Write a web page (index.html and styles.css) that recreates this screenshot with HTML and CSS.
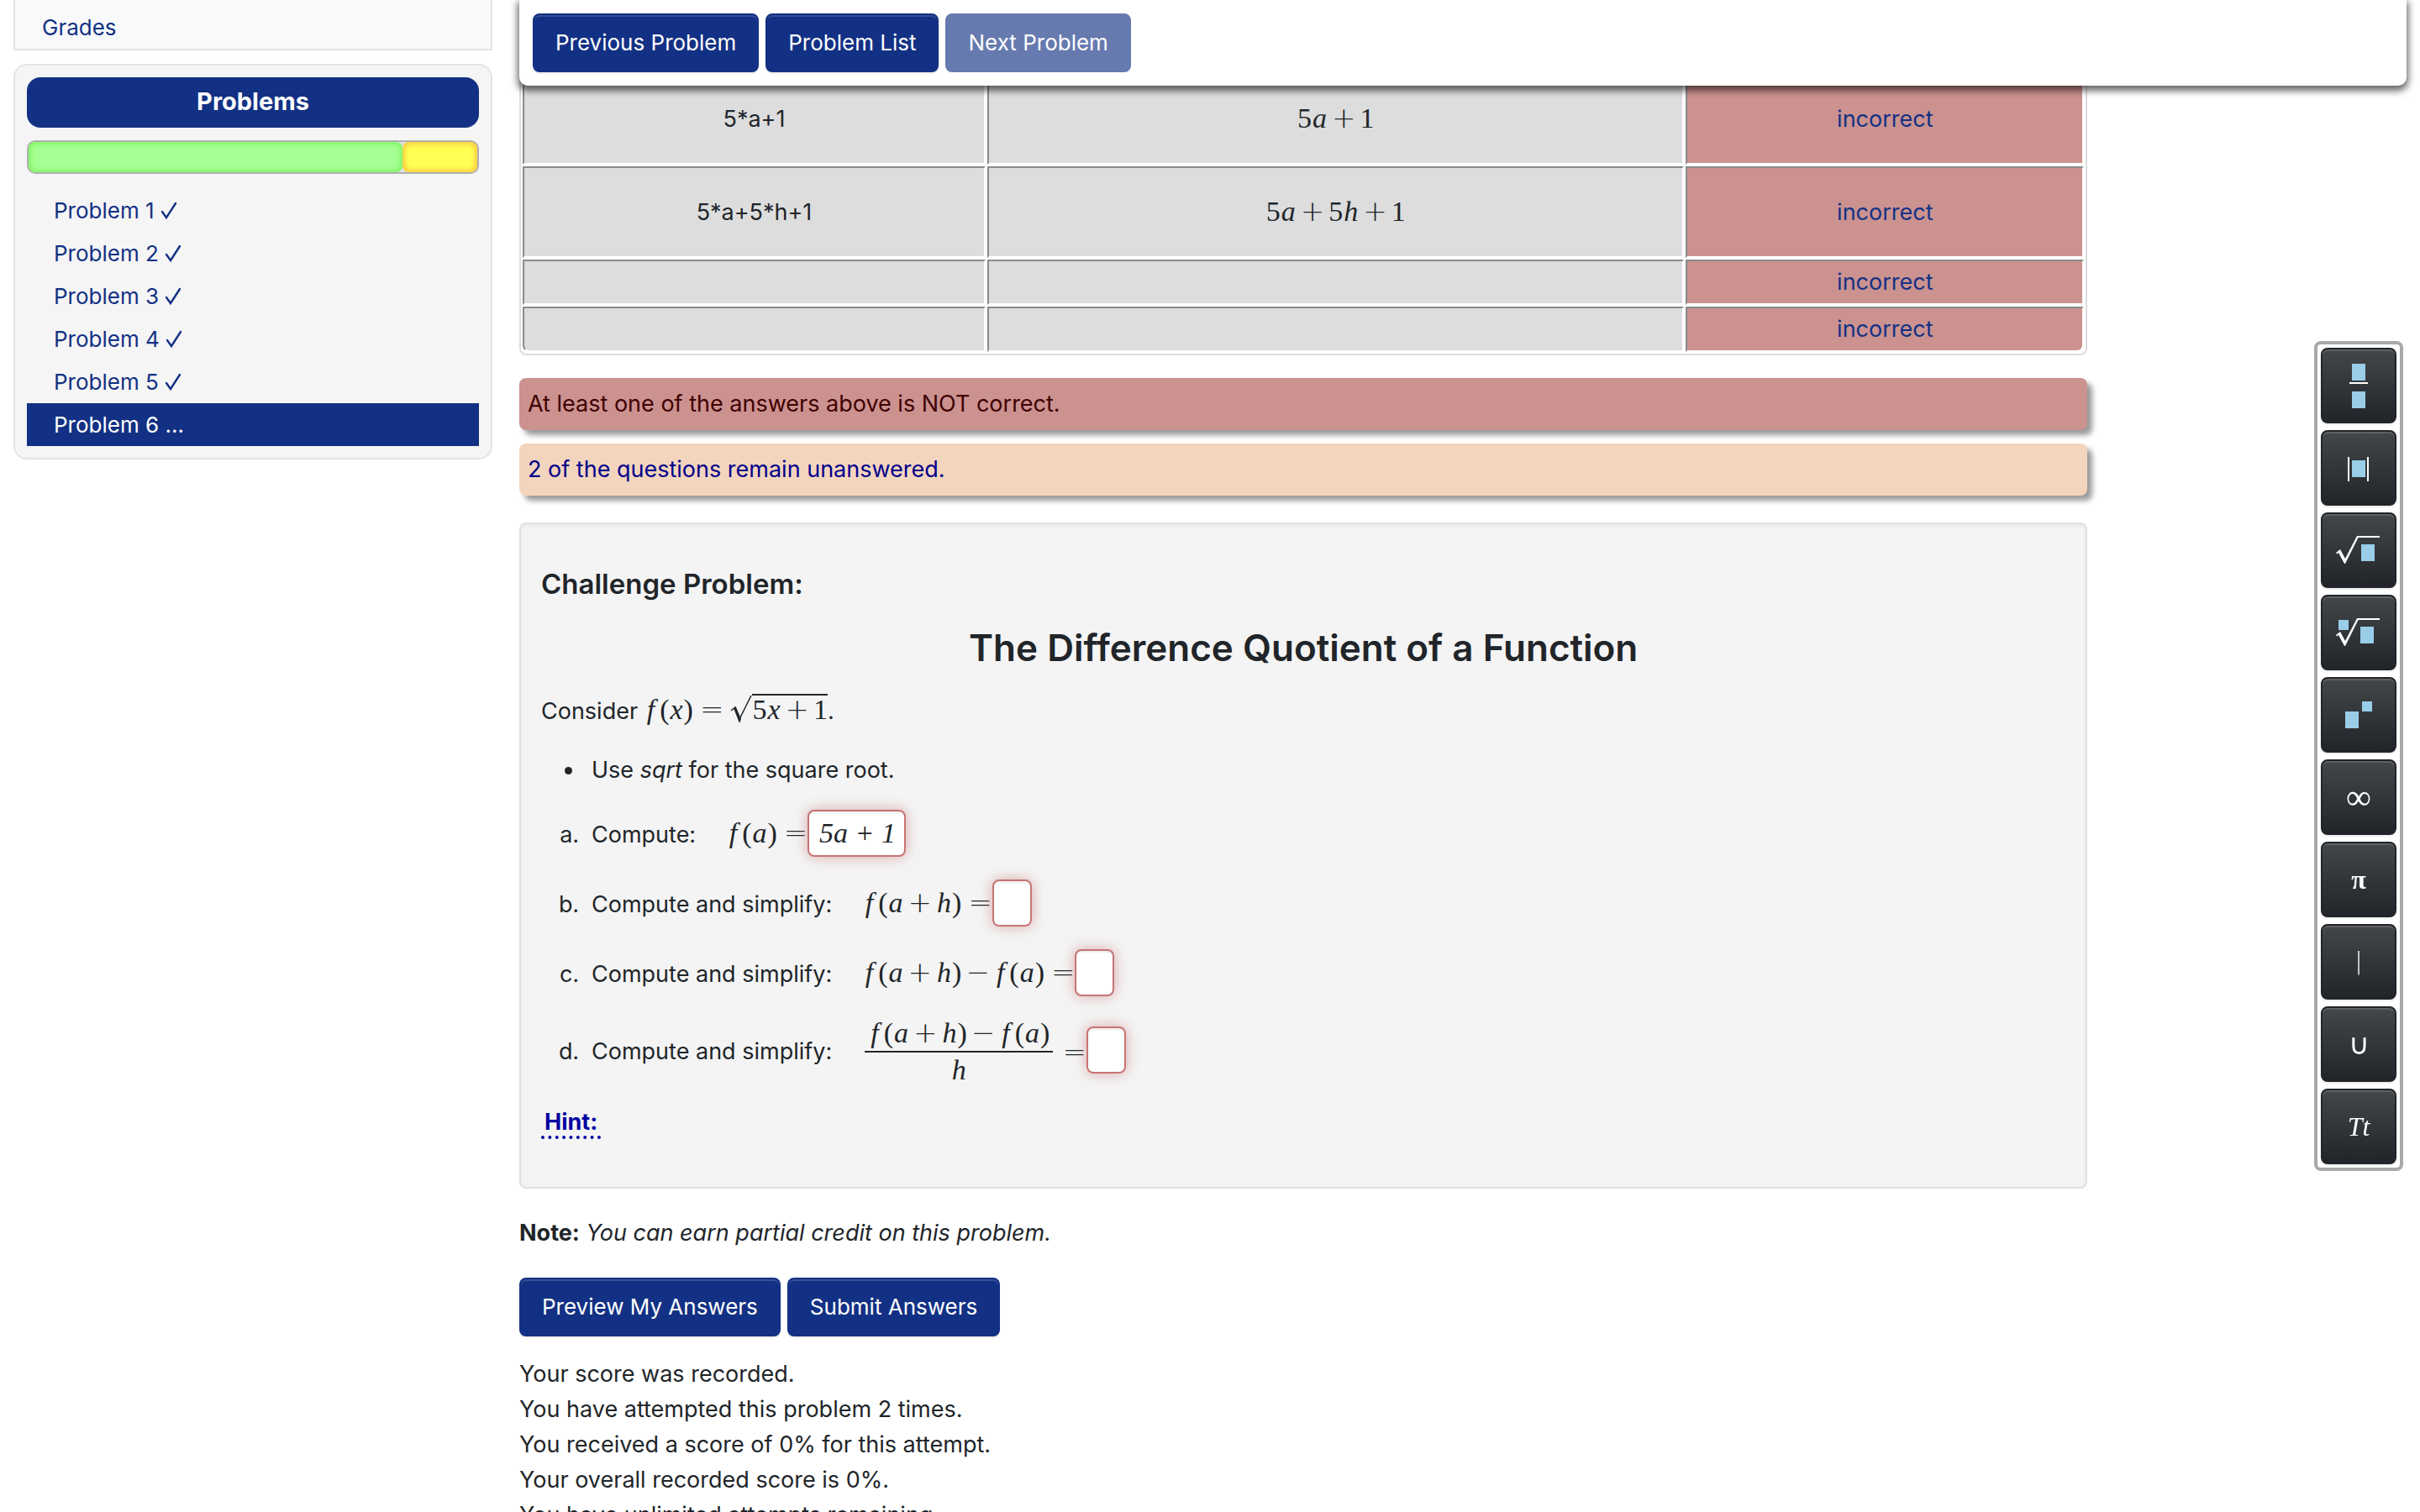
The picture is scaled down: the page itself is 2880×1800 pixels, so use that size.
FILE: index.html
```
<!DOCTYPE html>
<html lang="en">
<head>
<meta charset="utf-8">
<title>Problem 6</title>
<link rel="stylesheet" href="styles.css">
</head>
<body>
<div class="page">
  <aside class="sidebar">
    <nav class="site-nav" aria-label="Site">
      <a href="#">Grades</a>
    </nav>
    <nav class="problems" aria-label="Problems">
      <h2>Problems</h2>
      <div class="progress-bar">
        <div class="correct"></div>
        <div class="inprogress"></div>
      </div>
      <ul class="problem-list">
        <li><a href="#">Problem 1 <svg class="check" viewBox="0 0 20 22"><path d="M2 12l5 7L18 2"/></svg></a></li>
        <li><a href="#">Problem 2 <svg class="check" viewBox="0 0 20 22"><path d="M2 12l5 7L18 2"/></svg></a></li>
        <li><a href="#">Problem 3 <svg class="check" viewBox="0 0 20 22"><path d="M2 12l5 7L18 2"/></svg></a></li>
        <li><a href="#">Problem 4 <svg class="check" viewBox="0 0 20 22"><path d="M2 12l5 7L18 2"/></svg></a></li>
        <li><a href="#">Problem 5 <svg class="check" viewBox="0 0 20 22"><path d="M2 12l5 7L18 2"/></svg></a></li>
        <li><a href="#" class="active">Problem 6 ...</a></li>
      </ul>
    </nav>
  </aside>

  <main class="content">
    <div class="sticky-nav">
      <button type="button" class="btn">Previous Problem</button>
      <button type="button" class="btn">Problem List</button>
      <button type="button" class="btn" disabled>Next Problem</button>
    </div>

    <div class="problem-column">
      <table class="attempt-results">
        <colgroup><col class="entered"><col class="preview"><col class="result"></colgroup>
        <tbody>
          <tr class="tall">
            <td>5*a+1</td>
            <td><span class="math">5<i>a</i><b class="op">+</b>1</span></td>
            <td class="incorrect"><a href="#">incorrect</a></td>
          </tr>
          <tr class="tall">
            <td>5*a+5*h+1</td>
            <td><span class="math">5<i>a</i><b class="op">+</b>5<i>h</i><b class="op">+</b>1</span></td>
            <td class="incorrect"><a href="#">incorrect</a></td>
          </tr>
          <tr>
            <td></td>
            <td></td>
            <td class="incorrect"><a href="#">incorrect</a></td>
          </tr>
          <tr>
            <td></td>
            <td></td>
            <td class="incorrect"><a href="#">incorrect</a></td>
          </tr>
        </tbody>
      </table>

      <div class="message wrong">At least one of the answers above is NOT correct.</div>
      <div class="message blank">2 of the questions remain unanswered.</div>

      <form>
        <section class="problem">
          <h3>Challenge Problem:</h3>
          <h1>The Difference Quotient of a Function</h1>
          <p>Consider <span class="math"><i class="fn">f</i>(<i>x</i>)<b class="op rel">=</b><svg class="radical" viewBox="0 0 26 29"><path d="M1 19l5-4 5 14L25 1" fill="none" stroke-width="1.5"/><path d="M4 16l7 18 2-5-6-14z" stroke="none"/></svg><span class="radicand">5<i>x</i><b class="op">+</b>1</span></span>.</p>
          <ul class="tips">
            <li>Use <em>sqrt</em> for the square root.</li>
          </ul>
          <ol class="parts">
            <li>
              <label for="ans1">Compute: <span class="math"><i class="fn">f</i>(<i>a</i>)<b class="op rel">=</b></span></label>
              <input id="ans1" class="answer filled" type="text" value="5a + 1">
            </li>
            <li>
              <label for="ans2">Compute and simplify: <span class="math"><i class="fn">f</i>(<i>a</i><b class="op">+</b><i>h</i>)<b class="op rel">=</b></span></label>
              <input id="ans2" class="answer" type="text">
            </li>
            <li>
              <label for="ans3">Compute and simplify: <span class="math"><i class="fn">f</i>(<i>a</i><b class="op">+</b><i>h</i>)<b class="op">−</b><i class="fn">f</i>(<i>a</i>)<b class="op rel">=</b></span></label>
              <input id="ans3" class="answer" type="text">
            </li>
            <li class="with-fraction">
              <label for="ans4">Compute and simplify: <span class="math"><span class="fraction"><span class="num"><i class="fn">f</i>(<i>a</i><b class="op">+</b><i>h</i>)<b class="op">−</b><i class="fn">f</i>(<i>a</i>)</span><span class="den"><i>h</i></span></span><b class="op rel">=</b></span></label>
              <input id="ans4" class="answer" type="text">
            </li>
          </ol>
          <a href="#" class="hint">Hint:</a>
        </section>

        <p class="note"><strong>Note:</strong> <em>You can earn partial credit on this problem.</em></p>

        <div class="submit-row">
          <button type="button" class="btn">Preview My Answers</button>
          <button type="button" class="btn">Submit Answers</button>
        </div>
      </form>

      <div class="score-summary">
        Your score was recorded.<br>
        You have attempted this problem 2 times.<br>
        You received a score of 0% for this attempt.<br>
        Your overall recorded score is 0%.<br>
        You have unlimited attempts remaining.
      </div>
    </div>
  </main>
</div>

<div class="quill-toolbar" role="toolbar" aria-label="Math tools">
  <button type="button" aria-label="fraction">
    <svg viewBox="0 0 86 86"><path class="box" d="M35 17h16v20H35zM35 50h16v20H35z"/><path class="ink" d="M32 39h22v2H32z"/></svg>
  </button>
  <button type="button" aria-label="absolute value">
    <svg viewBox="0 0 86 86"><path class="box" d="M35 34h16v20H35z"/><path class="ink" d="M30 30h2v29h-2zM53 30h2v29h-2z"/></svg>
  </button>
  <button type="button" aria-label="square root">
    <svg viewBox="0 0 86 86"><path class="box" d="M46 36h16v20H46z"/><path class="ink" d="M16 46l5-4 6 11L41 26h27v2H42.500L27 59h-1l-7-13-2 1.500z"/></svg>
  </button>
  <button type="button" aria-label="nth root">
    <svg viewBox="0 0 86 86"><path class="box" d="M45 36h16v20H45zM19 28h12v12H19z"/><path class="ink" d="M16 46l5-4 6 11L41 26h27v2H42.500L27 59h-1l-7-13-2 1.500z"/></svg>
  </button>
  <button type="button" aria-label="exponent">
    <svg viewBox="0 0 86 86"><path class="box" d="M27 39h16v20H27zM47 27h12v12H47z"/></svg>
  </button>
  <button type="button" class="symbol infinity">∞</button>
  <button type="button" class="symbol pi">π</button>
  <button type="button" class="symbol thin">|</button>
  <button type="button" class="symbol thin union">∪</button>
  <button type="button" class="symbol text-mode">Tt</button>
</div>
</body>
</html>
```
FILE: styles.css
```
* {
  box-sizing: border-box;
}

body {
  margin: 0;
  background: #fff;
  color: #212529;
  font-family: Inter, "Liberation Sans", sans-serif;
  font-size: 27px;
  line-height: 42px;
  overflow: hidden;
}

a {
  color: #133184;
  text-decoration: none;
}

.page {
  display: flex;
  align-items: flex-start;
  gap: 32px;
  padding: 0 16px;
}

/* Sidebar */

.sidebar {
  flex: 0 0 570px;
  font-size: 26px;
}

.site-nav {
  padding: 12px 32px 4px;
  background: #f8f9fa;
  border: 2px solid #e4e4e4;
  border-top: 0;
}

.site-nav a {
  display: block;
}

.problems {
  margin-top: 16px;
  padding: 14px;
  background: #f5f5f5;
  border: 2px solid #e4e4e4;
  border-radius: 16px;
}

.problems h2 {
  margin: 0;
  padding: 8px 0 10px;
  background: #133184;
  border-radius: 16px;
  color: #fff;
  font-size: 29px;
  line-height: 42px;
  font-weight: 700;
  text-align: center;
}

.progress-bar {
  display: flex;
  height: 40px;
  margin-top: 15px;
  background: #e0e0e0;
  border: 2px solid #b0b0b0;
  border-radius: 10px;
}

.progress-bar div {
  border-radius: 8px;
}

.progress-bar .correct {
  flex: 5;
  background: #a5ff94;
  box-shadow: inset 0 0 6px 2px #7cf35c;
}

.progress-bar .inprogress {
  flex: 1;
  background: #ffff54;
  box-shadow: inset 0 0 6px 2px #f8bf3c;
}

.problem-list {
  list-style: none;
  margin: 18px 0 0;
  padding: 0;
}

.problem-list a {
  display: block;
  padding: 5px 32px 4px;
}

.problem-list .active {
  background: #133184;
  color: #fff;
}

.check {
  width: 20px;
  height: 22px;
  fill: none;
  stroke: #133184;
  stroke-width: 2.4;
  stroke-linecap: round;
  vertical-align: -2px;
}

/* Main content */

.content {
  flex: 1;
  display: grid;
  grid-template-columns: repeat(12, 1fr);
  column-gap: 32px;
}

.sticky-nav {
  grid-column: 1 / -1;
  position: sticky;
  top: 0;
  z-index: 1;
  display: flex;
  gap: 8px;
  padding: 16px;
  margin-bottom: -19px;
  background: #fff;
  border-radius: 0 0 10px 10px;
  box-shadow: 0 4px 8px 2px rgba(0, 0, 0, 0.6);
}

.problem-column {
  grid-column: 1 / 11;
}

.btn {
  padding: 12px 25px;
  background: #133184;
  border: 2px solid #133184;
  border-radius: 8px;
  box-shadow: inset 0 2px 0 rgba(255, 255, 255, 0.15), 0 2px 2px rgba(0, 0, 0, 0.08);
  color: #fff;
  font-family: inherit;
  font-size: 26px;
  line-height: 42px;
}

.btn:disabled {
  background: #667aaf;
  border-color: #667aaf;
  box-shadow: none;
}

.attempt-results {
  width: 100%;
  table-layout: fixed;
  border: 2px solid #ddd;
  border-radius: 8px;
  border-collapse: separate;
  border-spacing: 2px;
  text-align: center;
}

.attempt-results .entered {
  width: 551px;
}

.attempt-results .result {
  width: 474px;
}

.attempt-results td {
  height: 54px;
  padding: 4px;
  background: #ddd;
  border: 2px solid #fff;
  border-top-color: #888b8a;
  border-left-color: #888b8a;
}

.attempt-results .tall td {
  height: 109px;
}

.attempt-results .incorrect {
  background: #cb9290;
}

.attempt-results tr:last-child td:first-child {
  border-bottom-left-radius: 8px;
}

.attempt-results tr:last-child td:last-child {
  border-bottom-right-radius: 8px;
}

.message {
  margin-top: 16px;
  padding: 10px;
  border-radius: 8px;
  box-shadow: 6px 6px 6px rgba(0, 0, 0, 0.4);
}

.wrong {
  margin-top: 27px;
  background: #cb9290;
  color: #400000;
}

.blank {
  background: #f3d4bd;
  color: #00008b;
}

/* Problem body */

.problem {
  margin-top: 32px;
  padding: 48px 24px 56px;
  background: #f4f4f4;
  border: 2px solid #e1e1e1;
  border-radius: 8px;
  box-shadow: inset 0 2px 4px rgba(0, 0, 0, 0.05);
}

.problem h3 {
  margin: 0;
  font-size: 33px;
  line-height: 46px;
  font-weight: 600;
}

.problem h1 {
  margin: 23px 0 22px;
  font-size: 44px;
  line-height: 60px;
  font-weight: 600;
  text-align: center;
}

.problem p {
  margin: 0;
}

.tips,
.parts {
  margin: 0;
  padding-left: 52px;
}

.tips li,
.parts li {
  padding-left: 8px;
}

.tips {
  margin-top: 28px;
}

.parts {
  margin-top: 12px;
  list-style: lower-alpha;
}

.parts li {
  height: 83px;
  padding-top: 14px;
}

.parts .with-fraction {
  height: 116px;
  padding-top: 9px;
}

.math {
  display: inline-flex;
  align-items: baseline;
  font-family: "Liberation Serif", serif;
  font-size: 34px;
  line-height: 42px;
}

.math i {
  padding: 0 1px;
}

.math .fn {
  padding: 0 6px 0 3px;
}

.op {
  margin: 0 5px;
  font-family: "DejaVu Sans", sans-serif;
  font-size: 34px;
  font-weight: 200;
  line-height: 42px;
}

.rel {
  margin: 0 8px;
}

label .math {
  margin-left: 29px;
}

label .rel {
  margin-right: 0;
}

.with-fraction label {
  display: inline-flex;
  align-items: center;
}

.with-fraction .math {
  align-items: center;
  margin-left: 39px;
}

.with-fraction .rel {
  margin-left: 11px;
}

/* the tip of the radical hangs below the baseline */
.radical {
  width: 26px;
  height: 29px;
  fill: #212529;
  stroke: #212529;
  overflow: visible;
}

.radicand {
  display: inline-flex;
  align-items: baseline;
  border-top: 2px solid #212529;
  line-height: 32px;
}

.radicand .op {
  line-height: 32px;
}

.fraction {
  display: inline-flex;
  flex-direction: column;
  align-items: center;
}

.num {
  display: flex;
  align-items: baseline;
  padding: 0 4px;
  border-bottom: 2px solid #212529;
}

.answer {
  width: 47px;
  height: 56px;
  margin-left: -8px;
  padding: 0 12px;
  background: #fff;
  border: 2px solid #c77573;
  border-radius: 8px;
  box-shadow: 0 0 16px rgba(199, 117, 115, 0.6), inset 0 2px 2px rgba(0, 0, 0, 0.08);
  color: #212529;
  font-family: "Liberation Serif", serif;
  font-size: 34px;
  font-style: italic;
}

.answer.filled {
  width: 117px;
}

.hint {
  display: inline-block;
  padding: 0 4px;
  border-bottom: 4px dotted #0000a0;
  color: #0000a0;
  font-weight: 700;
  line-height: 32px;
}

.note {
  margin: 32px 0;
}

.submit-row {
  display: flex;
  gap: 8px;
}

.score-summary {
  margin-top: 24px;
}

/* Math toolbar */

.quill-toolbar {
  position: fixed;
  top: 50%;
  right: 20px;
  transform: translateY(-50%);
  display: flex;
  flex-direction: column;
  gap: 8px;
  padding: 4px;
  background: #fff;
  border: 4px solid #a9a9a9;
  border-radius: 8px;
}

.quill-toolbar button {
  width: 90px;
  height: 90px;
  padding: 0;
  background: linear-gradient(#43474a, #212529);
  border: 2px solid #212529;
  border-radius: 8px;
  box-shadow: inset 0 2px 0 rgba(255, 255, 255, 0.15), 0 2px 2px rgba(0, 0, 0, 0.08);
  color: #fff;
}

.quill-toolbar svg {
  display: block;
}

.quill-toolbar .box {
  fill: #99cde8;
}

.quill-toolbar .ink {
  fill: #fff;
}

.quill-toolbar .symbol {
  font-family: "Liberation Serif", serif;
  font-size: 32px;
  line-height: 40px;
}

.quill-toolbar .infinity {
  font-size: 42px;
}

.quill-toolbar .pi {
  font-weight: 700;
}

.quill-toolbar .thin {
  font-family: "DejaVu Sans", sans-serif;
  font-size: 28px;
  font-weight: 200;
}

.quill-toolbar .union {
  font-size: 34px;
}

.quill-toolbar .text-mode {
  font-style: italic;
}
```
